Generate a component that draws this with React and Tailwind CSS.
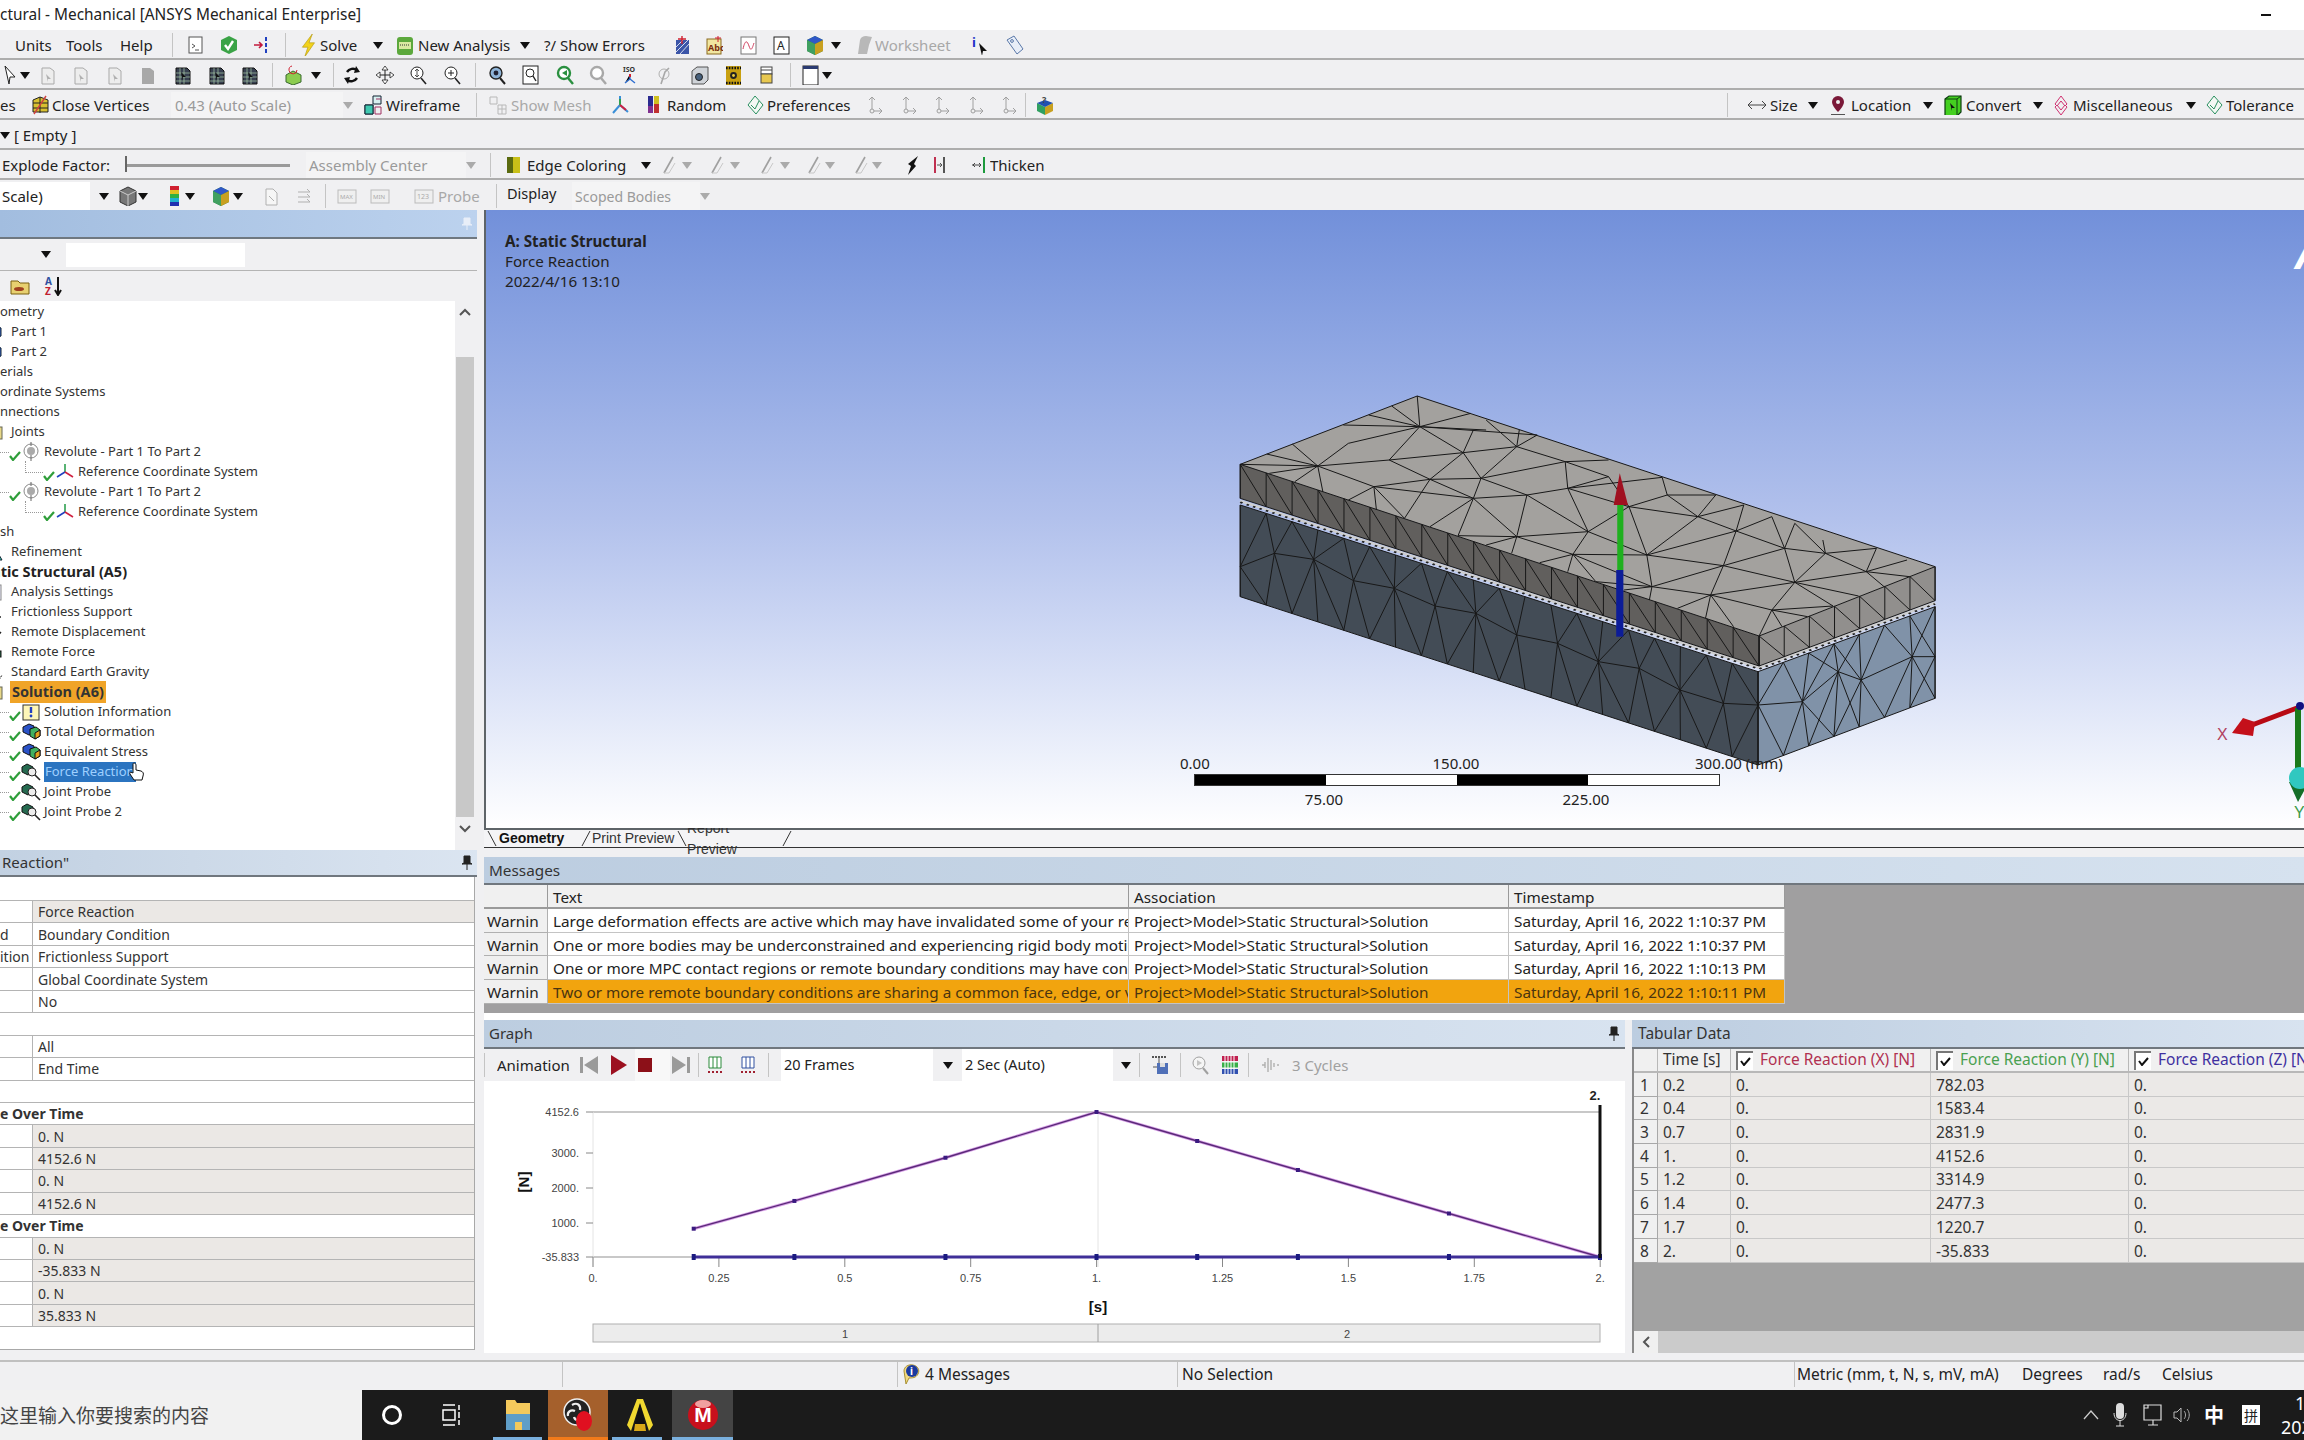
import React from "react";

const Arrow = ({ gray }) => (
  <svg width="10" height="7" viewBox="0 0 10 7"><polygon points="0,0 10,0 5,7" fill={gray ? "#aaa" : "#111"} /></svg>
);

const ic = {
  console: <g><rect x="4" y="2" width="13" height="16" fill="#fff" stroke="#555" /><path d="M7 9l3 2-3 2M10 15h4" stroke="#555" fill="none" /></g>,
  check: <g><path d="M10 1l8 4v10l-8 4-8-4V5z" fill="#3aa346" /><path d="M6 10l3 4 5-8" stroke="#fff" strokeWidth="2.4" fill="none" /></g>,
  arrows: <g><path d="M1 10h8M6 7l3 3-3 3" stroke="#c2183c" strokeWidth="1.6" fill="none" /><path d="M13 2v4M13 8v4M13 14v4" stroke="#2040c0" strokeWidth="2" /></g>,
  bolt: <g><path d="M13 0L4 12h5l-3 9 9-13h-5z" fill="#f2d21c" stroke="#b59a10" strokeWidth=".6" /></g>,
  newan: <g><rect x="2" y="2" width="16" height="18" rx="3" fill="#5ca83c" /><rect x="4" y="7" width="12" height="7" fill="#d8e8a0" /><path d="M5 10h10" stroke="#333" strokeDasharray="1 1" /></g>,
  hatch: <g><rect x="4" y="5" width="13" height="14" fill="#3b55a8" /><path d="M4 17L16 5M8 19L17 9M4 12l7-7" stroke="#fff" strokeWidth=".8" /><path d="M10 1v8M6 4h8" stroke="#d02030" strokeWidth="1.4" /></g>,
  abc: <g><rect x="4" y="4" width="14" height="15" fill="#f1e6a0" stroke="#8a6a20" /><text x="5" y="16" fontSize="9" fill="#7a3010" fontWeight="700">Abc</text><path d="M15 1v6M12 3h6" stroke="#d02030" /></g>,
  graphdoc: <g><rect x="3" y="2" width="15" height="17" fill="#fff" stroke="#777" /><path d="M5 14c2-9 4-9 6-3s3 3 5-3" stroke="#d04060" fill="none" /></g>,
  annot: <g><rect x="3" y="2" width="15" height="17" fill="#fff" stroke="#222" /><text x="6" y="15" fontSize="12" fill="#222">A</text></g>,
  contour: <g><path d="M10 1l8 4v11l-8 4-8-4V5z" fill="#267a3c" /><path d="M10 1l8 4-8 4-8-4z" fill="#3058c8" /><path d="M10 9l8-4v11l-8 4z" fill="#c8a020" /><path d="M2 5l8 4v11l-8-4z" fill="#40a060" /></g>,
  ws: <path d="M3 19L5 5c1-3 3-4 6-4l6 1-3 8-2 9z" fill="#b8b8b8" />,
  info: <g><text x="2" y="12" fontSize="13" fontWeight="700" fill="#2030c8">i</text><path d="M9 8l8 8-4 0-1 5z" fill="#111" /></g>,
  tag: <g><path d="M2 5l7-4 9 13-6 5z" fill="#e8eef8" stroke="#5a78a8" /><circle cx="7" cy="6" r="1.4" fill="none" stroke="#5a78a8" /></g>,
  cursor: <path d="M5 1l10 11-5 0-1 7z" fill="#fff" stroke="#222" />,
  gcube: <g><path d="M4 3h8l4 3v13H4z" fill="#ededed" stroke="#a9a9a9" /><path d="M8 9l5 5-3 0 0 3z" fill="#b0b0b0" /></g>,
  gsolid: <path d="M4 3h8l4 3v13H4z" fill="#a8a8a8" />,
  grid: <g><path d="M3 3h11l3 3v13H3z" fill="#384050" stroke="#111" /><path d="M3 8h14M3 12h14M3 16h14M7 3v16M11 3v16" stroke="#a8c8a8" strokeWidth=".7" /><path d="M8 7l5 5-3 0 0 4z" fill="#111" /></g>,
  gbox: <g><path d="M10 6l8 4v7l-8 3-7-3v-7z" fill="#8ccc50" stroke="#3a6a30" /><path d="M9 1a4 4 0 105 4" stroke="#d02030" fill="none" /></g>,
  rotate: <g><path d="M15 5a7 7 0 00-10 2" stroke="#111" strokeWidth="2.4" fill="none" /><path d="M5 15a7 7 0 0010-2" stroke="#111" strokeWidth="2.4" fill="none" /><polygon points="14,1 18,7 12,8" fill="#111" /><polygon points="6,19 2,13 8,12" fill="#111" /></g>,
  pan: <g><path d="M10 2v16M2 10h16" stroke="#222" /><path d="M7 5l3-4 3 4zM7 15l3 4 3-4zM5 7l-4 3 4 3zM15 7l4 3-4 3z" fill="#fff" stroke="#222" strokeWidth=".8" /></g>,
  zoom: <g><circle cx="9" cy="8" r="6" fill="#fff" stroke="#222" /><path d="M13 13l5 6" stroke="#222" strokeWidth="1.6" /><path d="M9 5v6M7 6l2-2 2 2M7 10l2 2 2-2" stroke="#222" fill="none" strokeWidth=".8" /></g>,
  zoomp: <g><circle cx="9" cy="8" r="6" fill="#fff" stroke="#222" /><path d="M13 13l5 6" stroke="#222" strokeWidth="1.6" /><path d="M9 5v6M6 8h6" stroke="#222" /></g>,
  magf: <g><circle cx="9" cy="8" r="6" fill="#8fb4d8" stroke="#222" strokeWidth="1.4" /><circle cx="9" cy="8" r="2.4" fill="#223" /><path d="M13 13l5 6" stroke="#222" strokeWidth="2" /></g>,
  magb: <g><rect x="3" y="1" width="15" height="18" fill="#fff" stroke="#222" /><circle cx="10" cy="8" r="4" fill="#fff" stroke="#222" /><path d="M13 11l3 5" stroke="#222" strokeWidth="1.4" /></g>,
  magg: <g><circle cx="9" cy="8" r="6" fill="#fff" stroke="#2a9040" strokeWidth="2.4" /><path d="M12 5l-5 3 5 3z" fill="#2a9040" /><path d="M13 13l5 6" stroke="#2a9040" strokeWidth="2.4" /></g>,
  maggr: <g><circle cx="9" cy="8" r="6" fill="#fff" stroke="#a8a8a8" strokeWidth="2.4" /><path d="M13 13l5 6" stroke="#a8a8a8" strokeWidth="2.4" /></g>,
  iso: <g><text x="3" y="7" fontSize="7" fontWeight="700" fill="#333">ISO</text><path d="M10 9v5l-5 4M10 14l5 4" stroke="#2f6fd0" strokeWidth="1.4" /><path d="M10 9v3" stroke="#d02030" strokeWidth="2" /></g>,
  eye: <g><circle cx="9" cy="9" r="5" fill="none" stroke="#b0b0b0" /><path d="M6 19l4-12 4-4" stroke="#a8a8a8" strokeWidth="1.6" fill="none" /></g>,
  cam: <g><path d="M2 6l5-4h11v13l-4 4H2z" fill="#cfd3d8" stroke="#555" /><circle cx="9" cy="12" r="3.5" fill="#46607c" stroke="#222" /></g>,
  film: <g><rect x="3" y="1" width="15" height="19" fill="#c8a010" /><path d="M3 3h15M3 18h15" stroke="#111" strokeWidth="2.6" strokeDasharray="1.6 1.2" /><circle cx="10.5" cy="10.5" r="3.4" fill="#222" /><circle cx="10.5" cy="10.5" r="1.4" fill="#f0d040" /></g>,
  ruler: <g><rect x="5" y="2" width="11" height="7" fill="#fff" stroke="#444" /><rect x="5" y="9" width="11" height="9" fill="#e8c850" stroke="#444" /><path d="M5 5h11" stroke="#444" /></g>,
  window: <g><rect x="3" y="1" width="15" height="19" fill="#fff" stroke="#222" /><rect x="3" y="1" width="15" height="3" fill="#2a3a70" /></g>,
  closev: <g><path d="M3 5l7-3 8 3v12H3z" fill="#d8c030" stroke="#222" /><path d="M3 8h15M3 13h15M10 2v16" stroke="#222" /><path d="M16 1L4 19" stroke="#d04040" strokeWidth="1.4" /></g>,
  wire: <g><path d="M10 1h8v8h-8zM2 10h8v9H2z" fill="#d8f0f0" stroke="#123" /><path d="M13 4h5M12 12h6v7h-6z" stroke="#a03060" fill="none" /><path d="M2 10h8v9H2z" fill="#40c8b0" stroke="#123" /></g>,
  showm: <g><path d="M2 2h7v7H2zM10 10h8v9h-8zM14 10v9M10 14h8" fill="none" stroke="#b8b8b8" /></g>,
  triad: <g><path d="M10 1v9M10 10l-7 8M10 10l8 7" strokeWidth="2" stroke="#3a8fd8" fill="none" /><path d="M10 4v6" stroke="#30a050" strokeWidth="2" /><path d="M10 10l6 5" stroke="#d02040" strokeWidth="2" /></g>,
  random: <g><rect x="3" y="1" width="5" height="10" fill="#2a2a90" /><rect x="9" y="1" width="5" height="8" fill="#d0c020" /><rect x="3" y="11" width="5" height="7" fill="#803090" /><rect x="9" y="9" width="5" height="9" fill="#c03030" /></g>,
  pref: <g><path d="M10 1l8 9-7 9-8-9z" fill="#f4f8f4" stroke="#2a9060" /><path d="M6 10l4 4 4-8" stroke="#2a9060" fill="none" /></g>,
  axis: <g><path d="M6 2v14M6 16h10M13 13l3 3-3 3M3 5l3-3 3 3" stroke="#a0a0a0" fill="none" /><circle cx="6" cy="16" r="2" fill="#eee" stroke="#a0a0a0" /></g>,
  qcube: <g><path d="M2 8l8 4v8l-8-4z" fill="#30a060" /><path d="M18 8l-8 4v8l8-4z" fill="#c8a020" /><path d="M2 8l8-3 8 3-8 4z" fill="#2050b0" /><text x="7" y="8" fontSize="9" fontWeight="700" fill="#444">?</text></g>,
  size: <path d="M1 10h18M5 6l-4 4 4 4M15 6l4 4-4 4" stroke="#444" fill="none" />,
  loc: <g><path d="M10 1a6 6 0 016 6c0 4-6 10-6 10S4 11 4 7a6 6 0 016-6z" fill="#7a1838" /><circle cx="10" cy="7" r="2" fill="#eee" /><path d="M3 20h14" stroke="#111" strokeWidth="1.4" /></g>,
  conv: <g><path d="M2 4l4-3h12v16l-4 4H2z" fill="#44d020" stroke="#0c3c10" strokeWidth="1.2" /><path d="M2 4h12v17M14 4l4-3" fill="none" stroke="#0c3c10" /><path d="M7 8l5 5-3 0 0 3z" fill="#111" /></g>,
  misc: <g><path d="M10 1L4 9l2 2 4-5 4 5 2-2z" fill="none" stroke="#d03070" /><path d="M10 20l-6-8 2-2 4 5 4-5 2 2z" fill="none" stroke="#d03070" /></g>,
  edge: <g><rect x="3" y="2" width="6" height="16" fill="#5a6a10" /><rect x="9" y="2" width="7" height="16" fill="#c8c018" /></g>,
  slash: <g><path d="M4 18L13 2" stroke="#a0a0a0" strokeWidth="1.6" /><path d="M4 18h5l6-10" stroke="#c8c8c8" fill="none" /></g>,
  pin: <path d="M16 1l-4 8 2 2-8 9 3-9-3-2z" fill="#111" />,
  redbar: <g><path d="M5 2v16" stroke="#c03050" strokeWidth="2" /><path d="M14 2v16" stroke="#555" strokeWidth="2" /><path d="M7 10h5M10 8l2 2-2 2" stroke="#555" fill="none" /></g>,
  thick: <g><path d="M15 2v16" stroke="#1c9a3c" strokeWidth="2" /><path d="M3 10h9M6 8l-2 2 2 2M10 8l2 2-2 2" stroke="#444" fill="none" /></g>,
  gcube2: <g><path d="M10 1l8 4v11l-8 4-8-4V5z" fill="#777" stroke="#333" /><path d="M2 5l8 4 8-4M10 9v11" stroke="#ccc" fill="none" /></g>,
  legend: <g><rect x="5" y="0" width="9" height="4" fill="#d02030" /><rect x="5" y="4" width="9" height="4" fill="#e0c020" /><rect x="5" y="8" width="9" height="4" fill="#30b040" /><rect x="5" y="12" width="9" height="4" fill="#20b0d0" /><rect x="5" y="16" width="9" height="4" fill="#2030b0" /></g>,
  docg: <g><path d="M5 3h7l4 4v12H5z" fill="#f6f6f6" stroke="#b0b0b0" /><path d="M8 10l5 5" stroke="#b0b0b0" /></g>,
  arrg: <g><path d="M3 6h12l-3-3M3 11h12l-3-3M3 16h12l-3-3" stroke="#b0b0b0" fill="none" /></g>,
  mx: <g><rect x="1" y="4" width="18" height="13" fill="#efefef" stroke="#bbb" /><text x="3" y="13" fontSize="6" fill="#aaa">MAX</text></g>,
  mn: <g><rect x="1" y="4" width="18" height="13" fill="#efefef" stroke="#bbb" /><text x="3" y="13" fontSize="6" fill="#aaa">MIN</text></g>,
  n123: <g><rect x="1" y="4" width="18" height="13" fill="#efefef" stroke="#bbb" /><text x="3" y="13" fontSize="7" fill="#aaa">123</text></g>,
  folder: <g><path d="M1 5h7l2 2h9v11H1z" fill="#e8d070" stroke="#7a6010" /><ellipse cx="9" cy="13" rx="5" ry="2" fill="#a04020" /></g>,
  az: <g><text x="2" y="9" fontSize="10" fontWeight="700" fill="#3050a0">A</text><text x="2" y="19" fontSize="10" fontWeight="700" fill="#c02030">Z</text><path d="M15 1v16M12 14l3 5 3-5" stroke="#111" strokeWidth="2" fill="none" /></g>,
};

const Ic = ({ k, s = 20 }) => (
  <svg width={s} height={s} viewBox="0 0 20 20" className="shrink-0">{ic[k]}</svg>
);

const B = ({ w, c = "", children }) => (
  <div className={"flex items-center shrink-0 h-full whitespace-nowrap overflow-hidden " + w + " " + c}>{children}</div>
);
const Sep = ({ w }) => (
  <div className={"flex items-center shrink-0 h-full " + w}>
    <div className="h-[24px] w-px bg-[#c4c4c4]" />
  </div>
);
const A = ({ w, gray }) => <B w={w}><Arrow gray={gray} /></B>;
const Row = ({ children }) => (
  <div className="flex items-center h-[30px] pt-[2px] shrink-0 border-b-2 border-[#adadad] bg-[#f0f0f2] text-[#222] overflow-hidden">{children}</div>
);
const Gray = "text-[#a8a8a8]";

const Toolbars = () => (
  <>
    <Row>
      <B w="w-[15px]" /><B w="w-[51px]">Units</B><B w="w-[54px]">Tools</B><B w="w-[52px]">Help</B><Sep w="w-[13px]" />
      <B w="w-[34px]"><Ic k="console" /></B><B w="w-[34px]"><Ic k="check" /></B><B w="w-[32px]"><Ic k="arrows" /></B><Sep w="w-[13px]" />
      <B w="w-[22px]"><Ic k="bolt" s={22} /></B><B w="w-[53px]">Solve</B><A w="w-[22px]" />
      <B w="w-[23px]"><Ic k="newan" /></B><B w="w-[102px]">New Analysis</B><A w="w-[24px]" />
      <B w="w-[128px]">?/ Show Errors</B><B w="w-[31px]"><Ic k="hatch" /></B><B w="w-[35px]"><Ic k="abc" /></B><B w="w-[33px]"><Ic k="graphdoc" /></B><B w="w-[34px]"><Ic k="annot" /></B>
      <B w="w-[26px]"><Ic k="contour" /></B><A w="w-[24px]" /><B w="w-[20px]"><Ic k="ws" /></B><B w="w-[95px]" c={Gray}>Worksheet</B><B w="w-[35px]"><Ic k="info" /></B><B w="w-[25px]"><Ic k="tag" /></B>
    </Row>
    <Row>
      <B w="w-[20px]"><Ic k="cursor" /></B><A w="w-[18px]" />
      <B w="w-[33px]"><Ic k="gcube" /></B><B w="w-[34px]"><Ic k="gcube" /></B><B w="w-[33px]"><Ic k="gcube" /></B><B w="w-[35px]"><Ic k="gsolid" /></B>
      <B w="w-[34px]"><Ic k="grid" /></B><B w="w-[33px]"><Ic k="grid" /></B><B w="w-[32px]"><Ic k="grid" /></B><Sep w="w-[11px]" />
      <B w="w-[28px]"><Ic k="gbox" /></B><A w="w-[22px]" /><Sep w="w-[9px]" />
      <B w="w-[33px]"><Ic k="rotate" /></B><B w="w-[33px]"><Ic k="pan" /></B><B w="w-[34px]"><Ic k="zoom" /></B><B w="w-[33px]"><Ic k="zoomp" /></B><Sep w="w-[12px]" />
      <B w="w-[33px]"><Ic k="magf" /></B><B w="w-[35px]"><Ic k="magb" /></B><B w="w-[33px]"><Ic k="magg" /></B><B w="w-[32px]"><Ic k="maggr" /></B><B w="w-[35px]"><Ic k="iso" /></B><B w="w-[35px]"><Ic k="eye" /></B><B w="w-[33px]"><Ic k="cam" /></B><B w="w-[33px]"><Ic k="film" /></B><B w="w-[34px]"><Ic k="ruler" /></B><Sep w="w-[10px]" />
      <B w="w-[22px]"><Ic k="window" /></B><A w="w-[14px]" />
    </Row>
    <Row>
      <B w="w-[30px]">es</B><B w="w-[22px]"><Ic k="closev" /></B><B w="w-[119px]">Close Vertices</B>
      <B w="w-[172px]" c="text-[#9a9a9a] pl-[4px] bg-[#f4f4f5]">0.43 (Auto Scale)</B><A w="w-[20px]" gray />
      <B w="w-[23px]"><Ic k="wire" /></B><B w="w-[90px]">Wireframe</B><Sep w="w-[12px]" />
      <B w="w-[23px]"><Ic k="showm" /></B><B w="w-[99px]" c={Gray}>Show Mesh</B><B w="w-[35px]"><Ic k="triad" /></B><B w="w-[22px]"><Ic k="random" /></B><B w="w-[78px]">Random</B>
      <B w="w-[22px]"><Ic k="pref" /></B><B w="w-[99px]">Preferences</B>
      <B w="w-[34px]"><Ic k="axis" /></B><B w="w-[33px]"><Ic k="axis" /></B><B w="w-[34px]"><Ic k="axis" /></B><B w="w-[33px]"><Ic k="axis" /></B><B w="w-[25px]"><Ic k="axis" /></B><Sep w="w-[10px]" />
      <B w="w-[692px]"><Ic k="qcube" /></B><Sep w="w-[20px]" />
      <B w="w-[23px]"><Ic k="size" /></B><B w="w-[38px]">Size</B><A w="w-[20px]" />
      <B w="w-[23px]"><Ic k="loc" /></B><B w="w-[72px]">Location</B><A w="w-[20px]" />
      <B w="w-[23px]"><Ic k="conv" /></B><B w="w-[67px]">Convert</B><A w="w-[18px]" />
      <B w="w-[22px]"><Ic k="misc" /></B><B w="w-[113px]">Miscellaneous</B><A w="w-[18px]" />
      <B w="w-[22px]"><Ic k="pref" /></B><B w="w-[80px]">Tolerance</B>
    </Row>
    <Row><B w="w-[14px]"><Arrow /></B><B w="w-[80px]">[ Empty ]</B></Row>
    <Row>
      <B w="w-[125px]" c="pl-[2px]">Explode Factor:</B>
      <div className="relative w-[181px] h-full shrink-0 flex items-center">
        <div className="w-[165px] h-[3px] bg-[#9a9a9a]" />
        <div className="absolute left-0 top-[4px] w-[3px] h-[16px] border-l-2 border-[#666]" />
      </div>
      <B w="w-[160px]" c="text-[#9a9a9a] pl-[3px] bg-[#f4f4f5]">Assembly Center</B><A w="w-[24px]" gray /><Sep w="w-[14px]" />
      <B w="w-[23px]"><Ic k="edge" /></B><B w="w-[114px]">Edge Coloring</B><A w="w-[19px]" />
      <B w="w-[22px]"><Ic k="slash" /></B><A w="w-[26px]" gray /><B w="w-[22px]"><Ic k="slash" /></B><A w="w-[28px]" gray />
      <B w="w-[22px]"><Ic k="slash" /></B><A w="w-[25px]" gray /><B w="w-[20px]"><Ic k="slash" /></B><A w="w-[27px]" gray />
      <B w="w-[20px]"><Ic k="slash" /></B><A w="w-[30px]" gray /><B w="w-[28px]"><Ic k="pin" /></B><B w="w-[39px]"><Ic k="redbar" /></B><B w="w-[21px]"><Ic k="thick" /></B><B w="w-[70px]">Thicken</B>
    </Row>
    <div className="flex items-center h-[30px] pt-[2px] shrink-0 bg-[#f0f0f2] text-[#222]">
      <B w="w-[90px]" c="bg-white pl-[2px]">Scale)</B><B w="w-[28px]" c="justify-center"><Arrow /></B>
      <B w="w-[20px]"><Ic k="gcube2" /></B><A w="w-[27px]" /><B w="w-[20px]"><Ic k="legend" /></B><A w="w-[26px]" />
      <B w="w-[22px]"><Ic k="contour" /></B><A w="w-[28px]" /><B w="w-[34px]"><Ic k="docg" /></B><B w="w-[30px]"><Ic k="arrg" /></B><Sep w="w-[12px]" />
      <B w="w-[33px]"><Ic k="mx" /></B><B w="w-[44px]"><Ic k="mn" /></B><B w="w-[24px]"><Ic k="n123" /></B>
      <B w="w-[58px]" c={Gray}>Probe</B><Sep w="w-[11px]" /><B w="w-[65px]" c="text-[14.5px] pb-[4px]">Display</B>
      <B w="w-[128px]" c="text-[#9a9a9a] text-[14px] pl-[3px] bg-[#f4f4f5]">Scoped Bodies</B><A w="w-[18px]" gray />
    </div>
  </>
);

const Check = () => (
  <svg width="12" height="10" viewBox="0 0 12 10" className="shrink-0 -mb-[8px]"><path d="M1 5l3 4 7-8" stroke="#2f9e3a" strokeWidth="2.2" fill="none" /></svg>
);
const TIc = {
  part: <g><path d="M10 3l7 3v8l-7 3-7-3V6z" fill="#3a64c8" stroke="#123" /></g>,
  fold: <g><rect x="2" y="5" width="16" height="12" fill="#e8d888" stroke="#665" /><rect x="5" y="8" width="5" height="5" fill="#8a6" /></g>,
  rev: <g><circle cx="10" cy="9" r="7" fill="none" stroke="#888" /><circle cx="10" cy="9" r="4" fill="#aaa" /><path d="M10 0v4M10 13v6" stroke="#666" /></g>,
  ref: <g><path d="M10 10V2" stroke="#2fa050" strokeWidth="1.6" /><path d="M10 10L2 15" stroke="#2040c0" strokeWidth="1.6" /><path d="M10 10l8 5" stroke="#d02040" strokeWidth="1.6" /></g>,
  tri: <path d="M10 4l8 14H2z" fill="#40c8b0" stroke="#123" />,
  set: <g><rect x="3" y="3" width="14" height="15" fill="#eef" stroke="#888" /><path d="M5 15l4-7 3 4 3-6" stroke="#c04" fill="none" /></g>,
  sup: <g><path d="M2 15h15" stroke="#222" strokeWidth="1.4" /><circle cx="10" cy="12" r="2.5" fill="none" stroke="#222" /></g>,
  dsp: <path d="M4 14l6 4 7-8" stroke="#222" strokeWidth="1.4" fill="none" />,
  frc: <rect x="5" y="9" width="12" height="6" fill="#2a6a4a" stroke="#111" />,
  grv: <path d="M15 0v16M12 13l3 5 3-5" stroke="#111" fill="none" strokeDasharray="2 1" />,
  sol: <g><rect x="2" y="5" width="16" height="12" fill="#e8d888" stroke="#665" /><rect x="5" y="8" width="5" height="5" fill="#286" /></g>,
  inf: <g><rect x="2" y="3" width="16" height="15" fill="#fdf6b8" stroke="#333" /><path d="M10 5v6" stroke="#223fc0" strokeWidth="2.4" /><circle cx="10" cy="14" r="1.4" fill="#223fc0" /></g>,
  res: <g><path d="M2 5l6-3 5 2v6l-5 3-6-3z" fill="#2a52c8" stroke="#111" /><path d="M9 7l6-2 4 3v6l-5 3-5-3z" fill="#40b060" stroke="#111" /><path d="M14 11l5-3v6l-5 3z" fill="#e0a020" stroke="#111" /></g>,
  prb: <g><path d="M1 5l5-3 6 3v5l-5 3-6-3z" fill="#256a50" stroke="#111" /><circle cx="11" cy="10" r="4" fill="#eee" stroke="#222" /><path d="M14 13l5 5" stroke="#222" strokeWidth="1.6" /></g>,
};
const TI = ({ k }) => <svg width="20" height="20" viewBox="0 0 20 20" className="shrink-0">{TIc[k]}</svg>;

const treeRows = [
  { t: "ometry" },
  { t: "Part 1", i: "part", lv: "a" },
  { t: "Part 2", i: "part", lv: "a" },
  { t: "erials" },
  { t: "ordinate Systems" },
  { t: "nnections" },
  { t: "Joints", i: "fold", lv: "a" },
  { t: "Revolute - Part 1 To Part 2", i: "rev", lv: "b" },
  { t: "Reference Coordinate System", i: "ref", lv: "c" },
  { t: "Revolute - Part 1 To Part 2", i: "rev", lv: "b" },
  { t: "Reference Coordinate System", i: "ref", lv: "c" },
  { t: "sh" },
  { t: "Refinement", i: "tri", lv: "a" },
  { t: "atic Structural (A5)", bold: true, pre: "-ml-[8px]" },
  { t: "Analysis Settings", i: "set", lv: "a" },
  { t: "Frictionless Support", i: "sup", lv: "a" },
  { t: "Remote Displacement", i: "dsp", lv: "a" },
  { t: "Remote Force", i: "frc", lv: "a" },
  { t: "Standard Earth Gravity", i: "grv", lv: "a" },
  { t: "Solution (A6)", i: "sol", lv: "o", orange: true },
  { t: "Solution Information", i: "inf", lv: "b" },
  { t: "Total Deformation", i: "res", lv: "b" },
  { t: "Equivalent Stress", i: "res", lv: "b" },
  { t: "Force Reaction", i: "prb", lv: "b", sel: true },
  { t: "Joint Probe", i: "prb", lv: "b" },
  { t: "Joint Probe 2", i: "prb", lv: "b" },
];

const TreeRow = ({ r }) => {
  const pre = r.lv === "a" || r.lv === "o" ? "-ml-[16px]" : r.pre || "";
  let txt = "";
  if (r.lv === "a") txt = "ml-[7px] ";
  if (r.lv === "b" || r.lv === "c") txt = "ml-[3px] ";
  if (r.orange) txt = "ml-[6px] bg-[#f0a428] font-bold text-[14.5px] text-[#333] px-[2px] ";
  if (r.bold) txt += "font-bold text-[14.5px] text-[#222] ";
  if (r.sel) txt += "bg-[#2b74c0] text-[#9fd0ff] px-[1px] ";
  return (
    <div className={"flex items-center h-[20px] whitespace-nowrap " + pre}>
      {r.lv === "b" && <div className="w-[9px] border-t border-dotted border-[#999] shrink-0" />}
      {r.lv === "c" && <div className="ml-[25px] w-[18px] h-[12px] -mt-[10px] border-l border-b border-dotted border-[#999] shrink-0" />}
      {(r.lv === "b" || r.lv === "c") && <Check />}
      {r.i && <TI k={r.i} />}
      <span className={txt}>{r.t}</span>
      {r.sel && (
        <svg width="18" height="20" viewBox="0 0 18 20" className="-ml-[8px] shrink-0 relative"><path d="M6 1c1 0 2 1 2 2v5l5 1c2 1 3 2 2 5l-1 4H6l-4-6c-1-2 1-2 3-1V3c0-1 0-2 1-2z" fill="#fff" stroke="#111" /></svg>
      )}
    </div>
  );
};

const TreePanel = () => (
  <div className="h-[640px] flex flex-col shrink-0">
    <div className="h-[29px] shrink-0 flex items-center justify-end pr-[3px] bg-gradient-to-r from-[#a2bddf] to-[#bcd2ee] border-b-2 border-[#6f7880]">
      <svg width="14" height="14" viewBox="0 0 14 14"><path d="M4 1h6v6l2 1H2l2-1zM7 8v5" fill="#e8eef8" stroke="#e8eef8" /></svg>
    </div>
    <div className="h-[32px] shrink-0 flex items-center border-b border-[#b4b4b4]">
      <B w="w-[36px]" /><B w="w-[20px]" c="justify-center"><Arrow /></B><B w="w-[10px]" />
      <div className="w-[179px] h-[24px] bg-white" />
    </div>
    <div className="h-[30px] shrink-0 flex items-center">
      <B w="w-[10px]" /><B w="w-[33px]"><Ic k="folder" /></B><B w="w-[24px]"><Ic k="az" /></B>
    </div>
    <div className="flex-1 flex min-h-0 overflow-hidden">
      <div className="w-[455px] bg-white pt-[1px] overflow-hidden relative font-['Noto_Sans',sans-serif] text-[13px] text-[#333]">
        {treeRows.map((r, n) => <TreeRow key={n} r={r} />)}
      </div>
      <div className="w-[20px] flex flex-col items-center bg-[#f0f0f2]">
        <div className="h-[22px] flex items-center"><svg width="12" height="8" viewBox="0 0 12 8"><path d="M1 7l5-5 5 5" stroke="#555" strokeWidth="2" fill="none" /></svg></div>
        <div className="w-[18px] mt-[34px] h-[460px] bg-[#c8c8c8]" />
        <div className="h-[22px] flex items-center mt-[1px]"><svg width="12" height="8" viewBox="0 0 12 8"><path d="M1 1l5 5 5-5" stroke="#555" strokeWidth="2" fill="none" /></svg></div>
      </div>
      <div className="w-[2px]" />
    </div>
  </div>
);

const detail = [
  ["", "", "w"],
  ["", "Force Reaction", "g"],
  ["d", "Boundary Condition", "w"],
  ["ition", "Frictionless Support", "w"],
  ["", "Global Coordinate System", "w"],
  ["", "No", "w"],
  ["", "", "h"],
  ["", "All", "w"],
  ["", "End Time", "w"],
  ["", "", "h"],
  ["e Over Time", "", "b"],
  ["", "0. N", "g"],
  ["", "4152.6 N", "g"],
  ["", "0. N", "g"],
  ["", "4152.6 N", "g"],
  ["e Over Time", "", "b"],
  ["", "0. N", "g"],
  ["", "-35.833 N", "g"],
  ["", "0. N", "g"],
  ["", "35.833 N", "g"],
  ["", "", "h"],
];

const DetailPanel = () => (
  <div className="h-[510px] flex flex-col shrink-0">
    <div className="h-[27px] shrink-0 flex items-center justify-between pr-[3px] bg-gradient-to-r from-[#c2d1e2] to-[#dbe5f1] border-b-2 border-[#70777e] text-[#333] text-[15px] font-['Noto_Sans',sans-serif]">
      <span className="pl-[2px]">Reaction"</span>
      <svg width="14" height="16" viewBox="0 0 14 16"><path d="M4 1h6v7l2 1H2l2-1zM7 9v6" fill="#222" stroke="#222" /></svg>
    </div>
    <div className="w-[475px] h-[473px] bg-white border-r border-b border-[#a8a8a8] font-['Noto_Sans',sans-serif] text-[14px] text-[#333] overflow-hidden">
      {detail.map((r, n) => (
        <div key={n} className={"border-b border-[#b4b4b4] flex items-center whitespace-nowrap " + (n === 0 ? "h-[24px]" : "h-[22.45px]")}>
          {r[2] === "b" ? (
            <span className="font-bold">{r[0]}</span>
          ) : r[2] === "h" ? null : n === 0 ? null : (
            <>
              <div className="w-[33px] h-full flex items-center border-r border-[#b4b4b4] shrink-0">{r[0]}</div>
              <div className={"flex-1 h-full flex items-center pl-[5px] " + (r[2] === "g" ? "bg-[#ebe8e5]" : "bg-white")}>{r[1]}</div>
            </>
          )}
        </div>
      ))}
    </div>
  </div>
);

/* mesh */
const faceEdges = [
  [[270, 288], [[118, 283], [170, 252], [220, 222], [330, 220], [410, 270], [380, 350], [225, 335], [175, 310], [280, 365]]],
  [[470, 170], [[415, 108], [465, 78], [370, 135], [320, 165], [330, 220], [410, 270], [555, 248], [570, 130], [600, 180], [700, 195]]],
  [[555, 248], [[410, 270], [490, 328], [590, 325], [660, 230], [575, 180]]],
  [[660, 230], [[590, 325], [755, 275], [700, 195], [665, 180], [600, 150]]],
  [[755, 275], [[840, 270], [760, 355], [590, 325], [840, 320]]],
  [[490, 328], [[380, 350], [575, 385], [440, 445], [590, 325], [410, 270]]],
  [[380, 350], [[330, 390], [385, 420], [440, 445], [575, 385]]],
  [[575, 385], [[680, 375], [545, 497], [490, 470], [660, 500], [590, 325]]],
  [[680, 375], [[760, 355], [590, 325], [660, 500], [800, 485]]],
  [[760, 355], [[880, 410], [945, 322], [840, 320], [800, 485]]],
  [[880, 410], [[955, 375], [1015, 440], [800, 485], [915, 555], [840, 320]]],
  [[955, 375], [[945, 322], [1050, 375], [1015, 440]]],
  [[1015, 440], [[1105, 405], [1090, 483], [915, 555], [1050, 375]]],
  [[800, 485], [[660, 500], [770, 553], [915, 555]]],
  [[660, 500], [[600, 525], [650, 550], [770, 553], [545, 497]]],
  [[770, 553], [[705, 578], [760, 605], [815, 635], [925, 650], [915, 555]]],
  [[915, 555], [[1065, 587], [1090, 483], [925, 650]]],
  [[1090, 483], [[1160, 440], [1185, 535], [1065, 587], [1105, 405]]],
  [[1185, 535], [[1265, 550], [1205, 637], [1065, 587], [1205, 460], [1160, 440]]],
  [[1265, 550], [[1345, 605], [1365, 535], [1205, 637], [1260, 510], [1205, 460]]],
  [[1345, 605], [[1430, 620], [1205, 637], [1380, 650], [1425, 570], [1365, 535]]],
  [[1205, 637], [[1065, 587], [1040, 675], [1160, 720], [1330, 678], [1280, 708]]],
  [[1065, 587], [[925, 650], [1040, 675]]],
  [[1040, 675], [[925, 650], [975, 715], [1160, 720], [1085, 770], [1030, 745]]],
  [[925, 650], [[815, 635], [870, 660], [920, 690]]],
  [[1160, 720], [[1135, 798], [1180, 770], [1230, 740], [1280, 708]]],
];
const faceD = faceEdges.map(([a, bs]) => bs.map((b) => `M${a[0]} ${a[1]}L${b[0]} ${b[1]}`).join("")).join("");

const lerp = (a, b, n) => Array.from({ length: n + 1 }, (_, i) => [a[0] + ((b[0] - a[0]) * i) / n, a[1] + ((b[1] - a[1]) * i) / n]);
const zig = (t1, t2, b1, b2, n) => {
  const T = lerp(t1, t2, n), Bt = lerp(b1, b2, n);
  let d = "";
  T.forEach((p, i) => {
    d += `M${p[0]} ${p[1]}L${Bt[i][0]} ${Bt[i][1]}`;
    if (i < n) d += `M${p[0]} ${p[1]}L${Bt[i + 1][0]} ${Bt[i + 1][1]}`;
  });
  return d;
};
const fan = (mid, t1, t2, b1, b2, n, dx) => {
  const T = lerp(t1, t2, n), Bt = lerp(b1, b2, n);
  let d = "";
  mid.forEach((m, j) => {
    if (j) d += `M${mid[j - 1][0]} ${mid[j - 1][1]}L${m[0]} ${m[1]}`;
    [...T, ...Bt].forEach((p) => {
      if (Math.abs(p[0] - m[0]) <= dx) d += `M${m[0]} ${m[1]}L${p[0]} ${p[1]}`;
    });
  });
  return d;
};
const slabL = zig([118, 283], [1135, 798], [118, 385], [1135, 888], 20);
const slabR = zig([1135, 798], [1480, 590], [1135, 888], [1480, 692], 7);
const midL = [[118, 590], [185, 550], [262, 568], [340, 632], [420, 655], [500, 708], [580, 730], [660, 795], [740, 820], [820, 875], [900, 895], [980, 960], [1065, 1000], [1133, 1005]];
const lowL = fan(midL, [118, 405], [1133, 905], [118, 680], [1133, 1185], 20, 62);
const midR = [[1133, 1005], [1220, 995], [1290, 905], [1335, 930], [1435, 860], [1480, 860]];
const lowR = fan(midR, [1133, 905], [1480, 710], [1133, 1185], [1480, 985], 7, 62);

const Mesh = () => (
  <svg width="800" height="460" viewBox="0 0 1568 1380" preserveAspectRatio="none" className="absolute left-[694px] top-[160px]">
    <polygon points="118,405 1133,905 1133,1185 118,680" fill="#434c56" />
    <polygon points="1133,905 1480,710 1480,985 1133,1185" fill="#8092a8" />
    <path d="M118 393L1135 893L1480 698" stroke="#cfcfcf" strokeWidth="7" fill="none" />
    <path d="M118 397L1135 897L1480 702" stroke="#222" strokeWidth="5" strokeDasharray="5 9" fill="none" />
    <polygon points="118,283 465,78 1480,590 1135,798" fill="#a3a19e" />
    <polygon points="118,283 1135,798 1135,888 118,385" fill="#615f5d" />
    <polygon points="1135,798 1480,590 1480,692 1135,888" fill="#918f8d" />
    <g stroke="#181818" strokeWidth="1" fill="none">
      <path d={faceD} vectorEffect="non-scaling-stroke" />
      <path d={slabL} vectorEffect="non-scaling-stroke" />
      <path d={slabR} vectorEffect="non-scaling-stroke" />
      <path d={lowL} vectorEffect="non-scaling-stroke" />
      <path d={lowR} vectorEffect="non-scaling-stroke" />
      <path d="M118 283L465 78L1480 590L1135 798L118 283L118 385L1135 888M1135 798V888L1480 692V590M118 405V680L1133 1185V905L118 405M1133 1185L1480 985V710L1133 905" vectorEffect="non-scaling-stroke" />
    </g>
    <rect x="855" y="600" width="14" height="200" fill="#0c1c98" />
    <rect x="857" y="405" width="12" height="195" fill="#1fb01f" />
    <polygon points="862,310 850,405 878,405" fill="#a01020" />
  </svg>
);

const Triad = () => (
  <svg width="90" height="120" viewBox="0 0 90 120" className="absolute left-[1728px] top-[492px] overflow-visible">
    <path d="M83 6L38 23" stroke="#b80a14" strokeWidth="5" />
    <polygon points="18,31 29,16 41,20 39,34" fill="#c4101a" />
    <rect x="81" y="6" width="6" height="64" fill="#1a7a1a" />
    <circle cx="86" cy="4" r="4" fill="#101080" />
    <path d="M75 80L84 100L95 80z" fill="#146e28" />
    <circle cx="86" cy="76" r="11" fill="#30c8c0" />
    <text x="3" y="38" fontSize="16" fill="#b04060" fontFamily="Liberation Sans">X</text>
    <text x="80" y="116" fontSize="16" fill="#3a9a4a" fontFamily="Liberation Sans">Y</text>
  </svg>
);

const Viewport = () => (
  <div className="relative h-[618px] shrink-0 overflow-hidden border-l-2 border-[#5e6468] bg-gradient-to-b from-[#7290da] via-[#b2c1ec] via-50% to-white font-['Noto_Sans',sans-serif] text-[15.2px] text-[#222]">
    <div className="pl-[19px] pt-[21px] leading-[20px]">
      <div className="font-bold">A: Static Structural</div>
      <div>Force Reaction</div>
      <div>2022/4/16 13:10</div>
    </div>
    <Mesh />
    <Triad />
    <div className="absolute left-[1810px] top-[22px] text-[42px] font-bold italic text-white leading-none">A</div>
    <div className="absolute left-[708px] top-[564px] w-[526px] h-[12px] flex border border-[#333]">
      <div className="w-1/4 bg-black" /><div className="w-1/4 bg-white" /><div className="w-1/4 bg-black" /><div className="w-1/4 bg-white" />
    </div>
    <div className="absolute left-[694px] top-[542px] text-[15px]">0.00</div>
    <div className="absolute left-[940px] top-[542px] w-[60px] text-center text-[15px]">150.00</div>
    <div className="absolute left-[1209px] top-[542px] whitespace-nowrap text-[15px]">300.00 (mm)</div>
    <div className="absolute left-[808px] top-[578px] w-[60px] text-center text-[15px]">75.00</div>
    <div className="absolute left-[1070px] top-[578px] w-[60px] text-center text-[15px]">225.00</div>
  </div>
);

const Slant = ({ back }) => (
  <svg width="10" height="17" viewBox="0 0 10 17" className="shrink-0"><path d={back ? "M1 1l8 15" : "M9 1L1 16"} stroke="#333" fill="none" /></svg>
);

const Tabs = () => (
  <div className="h-[20px] shrink-0 flex items-center border-t-2 border-[#5e6468] border-b border-b-[#333] text-[14px] text-[#333] font-['Liberation_Sans',sans-serif] bg-[#f4f4f6] pl-[3px]">
    <Slant back /><span className="w-[84px] pl-[2px] font-bold text-[#111]">Geometry</span>
    <Slant /><span className="w-[86px] pl-[1px]">Print Preview</span><Slant back />
    <span className="w-[95px]">Report Preview</span><Slant />
  </div>
);

const msgs = [
  ["Large deformation effects are active which may have invalidated some of your results", "Saturday, April 16, 2022 1:10:37 PM"],
  ["One or more bodies may be underconstrained and experiencing rigid body motion", "Saturday, April 16, 2022 1:10:37 PM"],
  ["One or more MPC contact regions or remote boundary conditions may have conflicts", "Saturday, April 16, 2022 1:10:13 PM"],
  ["Two or more remote boundary conditions are sharing a common face, edge, or vertex", "Saturday, April 16, 2022 1:10:11 PM"],
];

const Messages = () => (
  <div className="h-[156px] mt-[9px] shrink-0 flex flex-col text-[15.3px] text-[#222] font-['Noto_Sans',sans-serif]">
    <div className="h-[28px] shrink-0 flex items-center pl-[5px] bg-gradient-to-r from-[#bccde0] to-[#d6e2ef] border-b-2 border-[#70777e] text-[#333]">Messages</div>
    <div className="flex-1 min-h-0 bg-[#a09fa0] overflow-hidden">
      <div className="grid grid-cols-[64px_581px_380px_276px] w-[1301px]">
        <div className="h-[24px] border-r border-b-2 border-[#9a9a9a] bg-[#f0f0f0]" />
        <div className="h-[24px] border-r border-b-2 border-[#9a9a9a] bg-[#f0f0f0] flex items-center pl-[5px] pt-[2px]">Text</div>
        <div className="h-[24px] border-r border-b-2 border-[#9a9a9a] bg-[#f0f0f0] flex items-center pl-[5px] pt-[2px]">Association</div>
        <div className="h-[24px] border-r border-b-2 border-[#9a9a9a] bg-[#f0f0f0] flex items-center pl-[5px] pt-[2px]">Timestamp</div>
        {msgs.map((m, i) => {
          const sel = i === 3;
          const cell = "h-[23.7px] flex items-center pl-[5px] pt-[2px] whitespace-nowrap overflow-hidden border-r border-b border-[#c4c4c4] " + (sel ? "bg-[#f2a40e] text-[#4a3410]" : "bg-white");
          return (
            <React.Fragment key={i}>
              <div className="h-[23.7px] flex items-center pl-[3px] pt-[2px] border-r border-b border-[#b0b0b0] bg-[#f0f0f0] overflow-hidden">Warnin</div>
              <div className={cell}>{m[0]}</div>
              <div className={cell}>{"Project>Model>Static Structural>Solution"}</div>
              <div className={cell}>{m[1]}</div>
            </React.Fragment>
          );
        })}
      </div>
    </div>
  </div>
);

const gIc = {
  prev: <g><rect x="0" y="2" width="3" height="16" fill="#9a9a9a" /><path d="M18 1v18L4 10z" fill="#9a9a9a" /></g>,
  next: <g><rect x="17" y="2" width="3" height="16" fill="#9a9a9a" /><path d="M2 1v18l14-9z" fill="#9a9a9a" /></g>,
  play: <path d="M2 0v20l16-10z" fill="#9c1020" />,
  stop: <rect x="3" y="3" width="14" height="14" fill="#8c1018" />,
  f1: <g><path d="M4 2h12v11H4z" fill="#fff" stroke="#2a8a3a" /><path d="M8 2v11M12 2v11" stroke="#2a8a3a" /><path d="M3 17h14" stroke="#a02030" strokeWidth="2" strokeDasharray="2 2" /></g>,
  f2: <g><path d="M4 2h12v11H4z" fill="#fff" stroke="#3050a0" /><path d="M8 2v11M12 2v11" stroke="#3050a0" /><path d="M3 17h14" stroke="#a02030" strokeWidth="2" strokeDasharray="2 2" /></g>,
  save: <g><path d="M2 2h14" stroke="#555" strokeDasharray="2 1" strokeWidth="2" /><rect x="7" y="8" width="11" height="11" fill="#5070b8" /><rect x="10" y="8" width="5" height="4" fill="#ddd" /><path d="M9 2v6M3 12h4" stroke="#555" /></g>,
  zm: <g><circle cx="9" cy="8" r="6" fill="#f5f5f5" stroke="#a0a0a0" /><path d="M13 13l5 6" stroke="#a0a0a0" strokeWidth="2" /><path d="M7 5l5 3-5 3z" fill="#c4c4c4" /></g>,
  rgb: <g><g fill="#c02050"><rect x="2" y="1" width="16" height="5" /></g><g fill="#38b048"><rect x="2" y="7.5" width="16" height="5" /></g><g fill="#3050b0"><rect x="2" y="14" width="16" height="5" /></g><path d="M5 0v20M8 0v20M11 0v20M14 0v20" stroke="#fff" /></g>,
  cyc: <path d="M2 10h3M5 7v6M8 3v14M11 5v10M14 8v4M17 10h2" stroke="#b0b0b0" strokeWidth="1.4" />,
};
const GI = ({ k }) => <svg width="20" height="20" viewBox="0 0 20 20" className="shrink-0">{gIc[k]}</svg>;

const T = 593, R = 503.5;
const gx = (t) => T + t * R;
const gy = (v) => 1257 - ((v + 35.833) * 145) / 4188.4;
const data = [[0.2, 782.03], [0.4, 1583.4], [0.7, 2831.9], [1, 4152.6], [1.2, 3314.9], [1.4, 2477.3], [1.7, 1220.7], [2, -35.833]];
const pts = data.map(([t, v]) => `${gx(t)},${gy(v)}`).join(" ");

const Chart = () => (
  <svg width="1141" height="272" viewBox="484 1081 1141 272" className="block bg-white font-['Liberation_Sans',sans-serif]">
    <line x1="593" x2="1600" y1="1112" y2="1112" stroke="#c8c8c8" strokeWidth="2" />
    <line x1="593" x2="1600" y1="1257" y2="1257" stroke="#c8c8c8" strokeWidth="2" />
    <line x1="593" x2="593" y1="1112" y2="1267" stroke="#e4e4e4" />
    <line x1="1098" x2="1098" y1="1112" y2="1267" stroke="#e4e4e4" />
    {[[1112, "4152.6"], [1153, "3000."], [1188, "2000."], [1223, "1000."], [1257, "-35.833"]].map(([y, l]) => (
      <g key={l}>
        <line x1="586" x2="593" y1={y} y2={y} stroke="#888" />
        <text x="579" y={y + 4} textAnchor="end" fontSize="11" fill="#444">{l}</text>
      </g>
    ))}
    {["0.", "0.25", "0.5", "0.75", "1.", "1.25", "1.5", "1.75", "2."].map((l, i) => (
      <g key={l}>
        <line x1={593 + i * 125.9} x2={593 + i * 125.9} y1="1257" y2="1267" stroke="#888" />
        <text x={593 + i * 125.9} y="1282" textAnchor="middle" fontSize="11" fill="#444">{l}</text>
      </g>
    ))}
    <polyline points={pts} fill="none" stroke="#d8a0e8" strokeWidth="3" />
    <polyline points={pts} fill="none" stroke="#5a2a78" strokeWidth="1.4" />
    <line x1={gx(0.2)} x2="1600" y1="1257" y2="1257" stroke="#3f2f98" strokeWidth="3" />
    {data.map(([t, v]) => (
      <g key={t}>
        <rect x={gx(t) - 2} y={gy(v) - 2} width="4" height="4" fill="#3a1a80" />
        <rect x={gx(t) - 2} y="1254" width="4" height="6" fill="#1a1a80" />
      </g>
    ))}
    <line x1="1600" x2="1600" y1="1105" y2="1258" stroke="#111" strokeWidth="3" />
    <text x="1595" y="1100" textAnchor="middle" fontSize="13" fontWeight="700" fill="#222">2.</text>
    <text x="1098" y="1312" textAnchor="middle" fontSize="15" fontWeight="700" fill="#111">[s]</text>
    <text x="0" y="0" transform="translate(529,1182) rotate(-90)" textAnchor="middle" fontSize="15" fontWeight="700" fill="#111">[N]</text>
    <rect x="593" y="1324" width="1007" height="18" fill="#ececec" stroke="#b0b0b0" />
    <line x1="1098" x2="1098" y1="1324" y2="1342" stroke="#a0a0a0" />
    <text x="845" y="1338" textAnchor="middle" fontSize="11" fill="#444">1</text>
    <text x="1347" y="1338" textAnchor="middle" fontSize="11" fill="#444">2</text>
  </svg>
);

const Graph = () => (
  <div className="w-[1141px] shrink-0 flex flex-col font-['Noto_Sans',sans-serif] text-[15px] text-[#222]">
    <div className="h-[29px] shrink-0 flex items-center justify-between pl-[5px] pr-[4px] bg-gradient-to-r from-[#bccde0] to-[#d8e3f0] border-b-2 border-[#70777e] text-[#333]">
      <span>Graph</span>
      <svg width="14" height="16" viewBox="0 0 14 16"><path d="M4 1h6v7l2 1H2l2-1zM7 9v6" fill="#222" stroke="#222" /></svg>
    </div>
    <div className="h-[32px] shrink-0 flex items-center bg-[#f0f0f2]">
      <Sep w="w-[13px]" /><B w="w-[83px]">Animation</B>
      <B w="w-[29px]"><GI k="prev" /></B><B w="w-[26px]"><GI k="play" /></B><B w="w-[35px]" c="bg-[#f8f8f8]"><GI k="stop" /></B><B w="w-[28px]"><GI k="next" /></B>
      <Sep w="w-[7px]" /><B w="w-[33px]"><GI k="f1" /></B><B w="w-[30px]"><GI k="f2" /></B><Sep w="w-[13px]" />
      <B w="w-[152px]" c="bg-white pl-[3px] h-[24px] text-[14.5px]">20 Frames</B><B w="w-[29px]" c="justify-center"><Arrow /></B>
      <B w="w-[151px]" c="bg-white pl-[3px] h-[24px] text-[14.5px]">2 Sec (Auto)</B><B w="w-[26px]" c="justify-center"><Arrow /></B>
      <Sep w="w-[11px]" /><B w="w-[30px]"><GI k="save" /></B><Sep w="w-[10px]" /><B w="w-[30px]"><GI k="zm" /></B><B w="w-[28px]"><GI k="rgb" /></B><Sep w="w-[12px]" />
      <B w="w-[32px]"><GI k="cyc" /></B><B w="w-[66px]" c="text-[#a0a0a0]">3 Cycles</B>
    </div>
    <Chart />
  </div>
);

const tab = [["1", "0.2", "782.03"], ["2", "0.4", "1583.4"], ["3", "0.7", "2831.9"], ["4", "1.", "4152.6"], ["5", "1.2", "3314.9"], ["6", "1.4", "2477.3"], ["7", "1.7", "1220.7"], ["8", "2.", "-35.833"]];
const Cb = () => (
  <div className="w-[17px] h-[19px] shrink-0 bg-white border-l-2 border-t-2 border-[#777] flex items-center justify-center mr-[7px]">
    <svg width="11" height="9" viewBox="0 0 11 9"><path d="M1 4l3 4 6-7" stroke="#111" strokeWidth="2" fill="none" /></svg>
  </div>
);

const Tabular = () => {
  const hd = "h-[24px] flex items-center border-r border-b-2 border-[#b8b8b8] bg-[#f0f0f0] whitespace-nowrap overflow-hidden";
  const cl = "h-[23.7px] flex items-center pl-[5px] pt-[2px] border-r border-b border-[#c8c8c8] bg-[#ebe9e7]";
  return (
    <div className="flex-1 min-w-0 ml-[7px] flex flex-col font-['Noto_Sans',sans-serif] text-[15.5px] text-[#333]">
      <div className="h-[29px] shrink-0 flex items-center pl-[6px] bg-gradient-to-r from-[#bccde0] to-[#d8e3f0] border-b-2 border-[#70777e]">Tabular Data</div>
      <div className="h-[282px] w-full bg-[#a2a2a2] border-l-2 border-[#8a8a8a] overflow-hidden">
        <div className="grid grid-cols-[24px_73px_200px_198px_220px] w-[715px]">
          <div className={hd} />
          <div className={hd + " pl-[5px]"}>Time [s]</div>
          <div className={hd + " pl-[5px] text-[#b03050]"}><Cb />Force Reaction (X) [N]</div>
          <div className={hd + " pl-[5px] text-[#4aa050]"}><Cb />Force Reaction (Y) [N]</div>
          <div className={hd + " pl-[5px] text-[#4030a0]"}><Cb />Force Reaction (Z) [N]</div>
          {tab.map((r) => (
            <React.Fragment key={r[0]}>
              <div className="h-[23.7px] flex items-center pl-[6px] pt-[2px] border-r border-b border-[#a8a8a8] bg-[#f0f0f0]">{r[0]}</div>
              <div className={cl}>{r[1]}</div>
              <div className={cl}>0.</div>
              <div className={cl}>{r[2]}</div>
              <div className={cl}>0.</div>
            </React.Fragment>
          ))}
        </div>
      </div>
      <div className="h-[22px] shrink-0 flex items-center bg-[#cbcbcb] border-l-2 border-[#8a8a8a]">
        <div className="w-[24px] h-full flex items-center justify-center bg-[#f0f0f0]">
          <svg width="8" height="12" viewBox="0 0 8 12"><path d="M7 1L2 6l5 5" stroke="#555" strokeWidth="2" fill="none" /></svg>
        </div>
      </div>
    </div>
  );
};

const Status = () => (
  <div className="h-[30px] pb-[3px] shrink-0 flex items-center bg-[#f0f0f2] border-t-2 border-[#c0c0c0] text-[15.5px] text-[#222] font-['Noto_Sans',sans-serif]">
    <div className="w-[563px] h-full border-r border-[#c4c4c4] shrink-0" />
    <div className="w-[335px] h-full border-r border-[#c4c4c4] shrink-0" />
    <div className="w-[280px] h-full border-r border-[#c4c4c4] shrink-0 flex items-center pl-[3px]">
      <svg width="22" height="24" viewBox="0 0 22 24" className="shrink-0"><path d="M3 8c0-4 4-7 9-6s7 5 5 9-6 4-9 4l-3 6z" fill="#f0d880" stroke="#a89030" /><circle cx="11" cy="8" r="6" fill="#1a3aa0" /><text x="9" y="12" fontSize="10" fontWeight="700" fill="#fff">i</text></svg>
      <span className="ml-[2px]">4 Messages</span>
    </div>
    <div className="w-[617px] h-full border-r border-[#c4c4c4] shrink-0 flex items-center pl-[4px]">No Selection</div>
    <div className="flex items-center pl-[2px] whitespace-nowrap h-full">
      <span className="w-[225px]">Metric (mm, t, N, s, mV, mA)</span>
      <span className="w-[81px]">Degrees</span>
      <span className="w-[59px]">rad/s</span>
      <span>Celsius</span>
    </div>
  </div>
);

const Taskbar = () => (
  <div className="h-[50px] shrink-0 flex bg-[#1b1b1b] text-white overflow-hidden">
    <div className="w-[362px] h-full bg-[#f1f1f1] text-[#444] text-[19px] flex items-center font-['Noto_Sans_CJK_SC',sans-serif] shrink-0">这里输入你要搜索的内容</div>
    <div className="w-[20px] shrink-0" />
    <div className="w-[60px] flex items-center shrink-0">
      <div className="w-[20px] h-[20px] rounded-full border-[3px] border-white" />
    </div>
    <div className="w-[45px] flex items-center shrink-0">
      <svg width="20" height="22" viewBox="0 0 20 22"><path d="M1 1h12M1 21h12M1 6h12v10H1zM17 1v5M17 8v6M17 16v5" stroke="#fff" strokeWidth="1.5" fill="none" /></svg>
    </div>
    <div className="w-[61px] h-full relative flex items-center justify-center shrink-0">
      <svg width="30" height="34" viewBox="0 0 30 34"><path d="M3 2h9l2 3h13v27H3z" fill="#f4c95c" /><rect x="3" y="16" width="24" height="16" fill="#5f9ec8" /><rect x="12" y="24" width="7" height="8" fill="#f4c95c" /></svg>
      <div className="absolute bottom-0 left-[6px] right-[6px] h-[3px] bg-[#7ab0de]" />
    </div>
    <div className="w-[60px] h-full relative bg-[#a5602c] flex items-center justify-center shrink-0">
      <svg width="32" height="36" viewBox="0 0 32 36"><circle cx="15" cy="15" r="13" fill="#222" stroke="#eee" strokeWidth="1.5" /><path d="M10 8c5-3 9 0 8 5M6 19c-1-4 3-7 7-5M22 21c-3 4-9 3-10-1" stroke="#eee" strokeWidth="2.2" fill="none" /><ellipse cx="22" cy="24" rx="8" ry="10" fill="#e01020" /></svg>
      <div className="absolute bottom-0 left-0 right-0 h-[3px] bg-[#f27a1a]" />
    </div>
    <div className="w-[64px] h-full relative flex items-center justify-center shrink-0">
      <svg width="30" height="34" viewBox="0 0 30 34"><path d="M12 1h6l10 26-4 6-9-28-9 28-4-6z" fill="#f0d830" /><path d="M15 6l7 26H8z" fill="#111" /><path d="M9 33l1-7h10l1 7z" fill="#d8a818" /></svg>
      <div className="absolute bottom-0 left-[4px] right-[10px] h-[3px] bg-[#7ab0de]" />
    </div>
    <div className="w-[61px] h-full relative bg-[#444] flex items-center justify-center shrink-0">
      <svg width="32" height="36" viewBox="0 0 32 36"><circle cx="16" cy="18" r="15" fill="#c8101c" /><ellipse cx="16" cy="7" rx="8" ry="4" fill="#f0a0a0" /><text x="16" y="25" textAnchor="middle" fontSize="21" fontWeight="700" fill="#fff" fontFamily="Liberation Sans">M</text></svg>
      <div className="absolute bottom-0 left-0 right-0 h-[3px] bg-[#7ab0de]" />
    </div>
    <div className="flex-1" />
    <div className="flex items-center shrink-0 h-full">
      <svg width="16" height="10" viewBox="0 0 16 10"><path d="M1 9l7-8 7 8" stroke="#ccc" fill="none" strokeWidth="1.3" /></svg>
      <div className="w-[14px]" />
      <svg width="14" height="26" viewBox="0 0 14 26"><rect x="3" y="1" width="8" height="16" rx="4" fill="#ddd" /><path d="M1 11c0 10 12 10 12 0M7 19v5M3 24h8" stroke="#ddd" fill="none" /></svg>
      <div className="w-[16px]" />
      <svg width="20" height="24" viewBox="0 0 20 24"><path d="M1 2h17v15H1zM5 2v3H1M10 17v5M5 22h10" stroke="#ddd" fill="none" strokeWidth="1.2" /></svg>
      <div className="w-[10px]" />
      <svg width="18" height="18" viewBox="0 0 18 18"><path d="M1 6h3l4-4v14l-4-4H1z" stroke="#bbb" fill="none" /><path d="M11 5c2 2 2 6 0 8M14 3c3 3 3 9 0 12" stroke="#aaa" fill="none" /></svg>
      <div className="w-[13px]" />
      <span className="text-[20px] font-['Noto_Sans_CJK_SC',sans-serif] font-bold w-[22px]">中</span>
      <div className="w-[16px]" />
      <span className="w-[18px] h-[20px] bg-white text-[#222] text-[14px] flex items-center justify-center font-['Noto_Sans_CJK_SC',sans-serif]">拼</span>
      <div className="w-[21px]" />
      <div className="flex flex-col w-[23px] text-[18px] leading-[24px] whitespace-nowrap font-['Noto_Sans',sans-serif] overflow-hidden">
        <span className="pl-[14px]">1</span>
        <span>202</span>
      </div>
    </div>
  </div>
);

export default function App() {
  return (
    <div className="w-[2304px] h-[1440px] overflow-hidden flex flex-col bg-[#f0f0f2] text-[15px] font-['Noto_Sans',sans-serif]">
      <div className="h-[30px] shrink-0 bg-white flex items-center justify-between text-[15.4px] text-[#222]">
        <span>ctural - Mechanical [ANSYS Mechanical Enterprise]</span>
        <span className="mr-[33px] w-[10px] h-[2px] bg-[#111]" />
      </div>
      <Toolbars />
      <div className="flex h-[1150px] shrink-0 overflow-hidden">
        <div className="w-[477px] shrink-0 flex flex-col">
          <TreePanel />
          <DetailPanel />
        </div>
        <div className="w-[7px] shrink-0" />
        <div className="w-[1820px] shrink-0 flex flex-col">
          <Viewport />
          <Tabs />
          <Messages />
          <div className="h-[7px] shrink-0 bg-white" />
          <div className="flex h-[333px] shrink-0">
            <Graph />
            <Tabular />
          </div>
        </div>
      </div>
      <Status />
      <Taskbar />
    </div>
  );
}
